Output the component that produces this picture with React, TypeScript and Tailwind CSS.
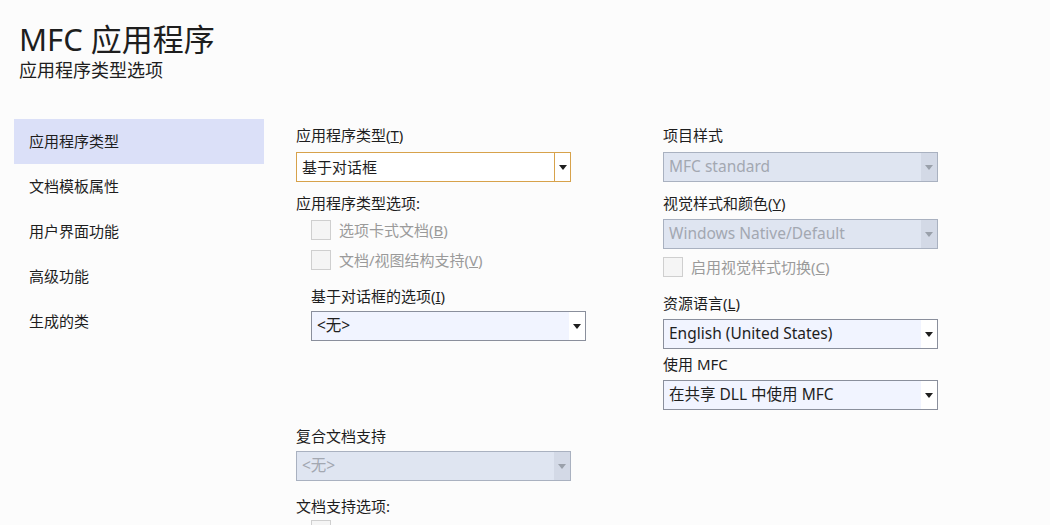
import React from "react";

const font = { fontFamily: '"Noto Sans", "Noto Sans CJK SC", sans-serif' };

function Arrow({ muted }: { muted?: boolean }) {
  return (
    <svg width="8" height="5" viewBox="0 0 8 5">
      <path d="M0 0h8L4 5z" fill={muted ? "#9aa0aa" : "#1e1e1e"} />
    </svg>
  );
}

type Kind = "focus" | "normal" | "disabled";

function Combo({ value, kind, className = "" }: { value: string; kind: Kind; className?: string }) {
  if (kind === "disabled") {
    return (
      <div className={`flex h-[30px] w-[275px] border border-[#a9b1c0] bg-[#dfe5f1] ${className}`}>
        <div className="flex flex-1 items-center pl-[5px] text-[15.5px] text-[#a3a8b1]">{value}</div>
        <div className="flex w-[16px] items-center justify-center bg-[#d3d9e6]">
          <Arrow muted />
        </div>
      </div>
    );
  }
  if (kind === "focus") {
    return (
      <div className={`flex h-[30px] w-[275px] border border-[#d7a24b] bg-white ${className}`}>
        <div className="flex flex-1 items-center pl-[5px] text-[15px] text-[#1e1e1e]">{value}</div>
        <div className="flex w-[16px] items-center justify-center border-l border-[#d7a24b]">
          <Arrow />
        </div>
      </div>
    );
  }
  return (
    <div className={`flex h-[30px] w-[275px] border border-[#8a8f9c] bg-[#f1f4ff] ${className}`}>
      <div className="flex flex-1 items-center pl-[5px] text-[15.5px] text-[#1e1e1e]">{value}</div>
      <div className="flex w-[16px] items-center justify-center bg-white">
        <Arrow />
      </div>
    </div>
  );
}

function Check({ label, className = "" }: { label: React.ReactNode; className?: string }) {
  return (
    <div className={`flex h-[20px] items-center gap-[8px] ${className}`}>
      <div className="h-[20px] w-[20px] border border-[#cfcfcf] bg-[#f5f5f5]" />
      <span className="text-[15px] text-[#9a9a9a]">{label}</span>
    </div>
  );
}

function Label({ children, className = "" }: { children: React.ReactNode; className?: string }) {
  return <div className={`h-[20px] text-[15px] leading-[20px] text-[#1e1e1e] ${className}`}>{children}</div>;
}

const navItems = ["应用程序类型", "文档模板属性", "用户界面功能", "高级功能", "生成的类"];

export default function App() {
  return (
    <div className="h-[525px] w-[1050px] overflow-hidden bg-[#fcfcfc]" style={font}>
      <header className="pl-[19px] pt-[20px]">
        <h1 className="text-[31px] leading-[38px] text-[#1e1e1e]">MFC 应用程序</h1>
        <div className="text-[18px] leading-[24px] text-[#1e1e1e]">应用程序类型选项</div>
      </header>

      <div className="mt-[37px] flex">
        <nav className="ml-[14px] w-[250px]">
          {navItems.map((item, i) => (
            <div
              key={item}
              className={`flex h-[45px] items-center pl-[15px] text-[15px] text-[#1e1e1e] ${
                i === 0 ? "bg-[#dbe0f8]" : ""
              }`}
            >
              {item}
            </div>
          ))}
        </nav>

        <section className="ml-[32px] flex w-[275px] flex-col pt-[6px]">
          <Label>
            应用程序类型(<u>T</u>)
          </Label>
          <Combo value="基于对话框" kind="focus" className="mt-[7px]" />
          <Label className="mt-[11px]">应用程序类型选项:</Label>
          <div className="ml-[15px] mt-[7px] flex flex-col gap-[10px]">
            <Check
              label={
                <>
                  选项卡式文档(<u>B</u>)
                </>
              }
            />
            <Check
              label={
                <>
                  文档/视图结构支持(<u>V</u>)
                </>
              }
            />
          </div>
          <div className="ml-[15px]">
            <Label className="mt-[16px]">
              基于对话框的选项(<u>I</u>)
            </Label>
            <Combo value="<无>" kind="normal" className="mt-[5px]" />
          </div>
          <Label className="mt-[85px]">复合文档支持</Label>
          <Combo value="<无>" kind="disabled" className="mt-[5px]" />
          <Label className="mt-[15px]">文档支持选项:</Label>
          <Check label="" className="ml-[15px] mt-[4px]" />
        </section>

        <section className="ml-[92px] flex w-[275px] flex-col pt-[6px]">
          <Label>项目样式</Label>
          <Combo value="MFC standard" kind="disabled" className="mt-[7px]" />
          <Label className="mt-[11px]">
            视觉样式和颜色(<u>Y</u>)
          </Label>
          <Combo value="Windows Native/Default" kind="disabled" className="mt-[6px]" />
          <Check
            className="mt-[8px]"
            label={
              <>
                启用视觉样式切换(<u>C</u>)
              </>
            }
          />
          <Label className="mt-[16px]">
            资源语言(<u>L</u>)
          </Label>
          <Combo value="English (United States)" kind="normal" className="mt-[6px]" />
          <Label className="mt-[5px]">使用 MFC</Label>
          <Combo value="在共享 DLL 中使用 MFC" kind="normal" className="mt-[6px]" />
        </section>
      </div>
    </div>
  );
}
